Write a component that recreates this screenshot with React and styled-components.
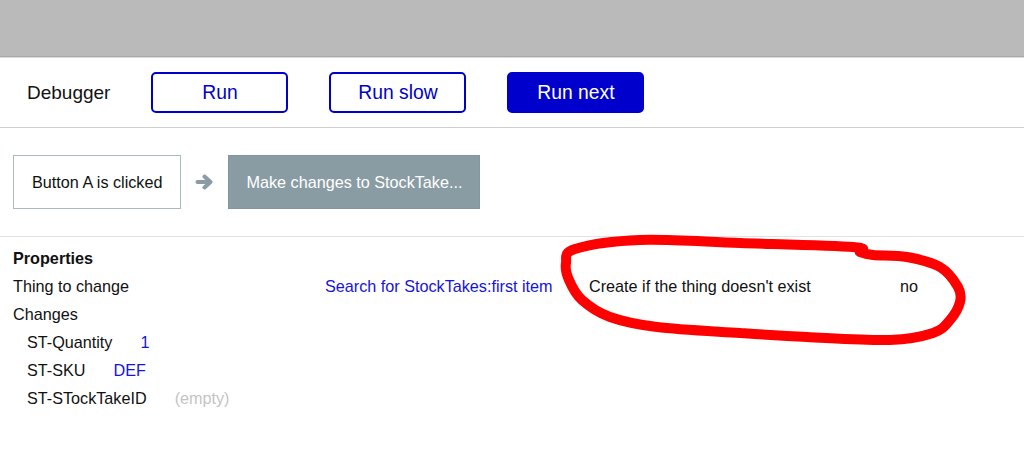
import React from 'react';
import styled, { createGlobalStyle } from 'styled-components';

const GlobalStyle = createGlobalStyle`
  body {
    margin: 0;
    background: #fff;
    font-family: "Liberation Sans", Arial, sans-serif;
    color: #111;
  }
`;

const Page = styled.div`
  position: relative;
  width: 1024px;
  height: 449px;
  overflow: hidden;
`;

const TopBar = styled.div`
  height: 56px;
  background: #bababa;
  border-bottom: 1px solid #a9a9a9;
  box-shadow: 0 1px 0 #dadada;
`;

const Toolbar = styled.div`
  display: flex;
  align-items: center;
  gap: 41px;
  height: 69px;
  margin-top: 1px;
  padding-left: 27px;
  border-bottom: 1px solid #cfcfcf;
`;

const Title = styled.span`
  font-size: 19px;
  color: #111;
`;

const Button = styled.button`
  width: 137px;
  height: 41px;
  border: 2px solid #0000cc;
  border-radius: 5px;
  background: ${(p) => (p.primary ? '#0000cc' : '#fff')};
  color: ${(p) => (p.primary ? '#fff' : '#0000cc')};
  font-family: inherit;
  font-size: 19.3px;
  cursor: pointer;
`;

const Flow = styled.div`
  display: flex;
  align-items: center;
  padding: 27px 13px 27px;
  border-bottom: 1px solid #e2e2e2;
`;

const Step = styled.div`
  display: flex;
  align-items: center;
  height: 54px;
  box-sizing: border-box;
  padding: 0 ${(p) => (p.active ? '17px' : '18px')};
  font-size: 16.2px;
  border: 1px solid ${(p) => (p.active ? '#83969d' : '#a9b9c0')};
  background: ${(p) => (p.active ? '#8a9ca3' : '#fff')};
  color: ${(p) => (p.active ? '#fff' : '#111')};
`;

const ArrowIcon = styled.svg`
  margin: 0 14px 0 14px;
  flex-shrink: 0;
`;

const Properties = styled.div`
  padding: 7px 13px 0;
  font-size: 16.2px;
`;

const Heading = styled.div`
  font-weight: bold;
  line-height: 28px;
`;

const PropGrid = styled.div`
  display: grid;
  grid-template-columns: 312px 264px 311px auto;
  line-height: 28px;
`;

const Link = styled.span`
  color: #1414dd;
`;

const Row = styled.div`
  line-height: 28px;
`;

const ChangeRow = styled.div`
  display: flex;
  gap: 28px;
  padding-left: 14px;
  line-height: 28px;
`;

const Value = styled.span`
  color: ${(p) => (p.empty ? '#c4c4c4' : '#1414dd')};
`;

const Scribble = styled.svg`
  position: absolute;
  left: 555px;
  top: 232px;
  pointer-events: none;
`;

// hand-drawn red loop around the "Create if..." option
const loop = [
  [20, 17], [85, 8], [185, 11], [298, 15], [305, 20], [318, 23], [352, 25],
  [385, 35], [403, 55], [405, 70], [395, 88], [378, 101], [335, 108],
  [252, 105], [185, 101], [102, 95], [55, 85], [27, 68], [14, 48], [11, 31],
];

const smoothPath = (pts) => {
  const n = pts.length;
  let d = `M${pts[0][0]},${pts[0][1]}`;
  for (let i = 0; i < n; i++) {
    const p0 = pts[(i - 1 + n) % n];
    const p1 = pts[i];
    const p2 = pts[(i + 1) % n];
    const p3 = pts[(i + 2) % n];
    const c1 = [p1[0] + (p2[0] - p0[0]) / 6, p1[1] + (p2[1] - p0[1]) / 6];
    const c2 = [p2[0] - (p3[0] - p1[0]) / 6, p2[1] - (p3[1] - p1[1]) / 6];
    d += ` C${c1[0]},${c1[1]} ${c2[0]},${c2[1]} ${p2[0]},${p2[1]}`;
  }
  return d + 'Z';
};

const changes = [
  { name: 'ST-Quantity', value: '1' },
  { name: 'ST-SKU', value: 'DEF' },
  { name: 'ST-STockTakeID', value: '(empty)', empty: true },
];

const App = () => {
  return (
    <Page>
      <GlobalStyle />
      <TopBar />

      <Toolbar>
        <Title>Debugger</Title>
        <Button>Run</Button>
        <Button>Run slow</Button>
        <Button primary>Run next</Button>
      </Toolbar>

      <Flow>
        <Step>Button A is clicked</Step>
        <ArrowIcon width="19" height="16" viewBox="0 0 19 16">
          <path
            d="M2.5 8 H15 M9.5 2.5 L15.5 8 L9.5 13.5"
            fill="none"
            stroke="#8a9ca3"
            strokeWidth="4"
            strokeLinecap="round"
            strokeLinejoin="round"
          />
        </ArrowIcon>
        <Step active>Make changes to StockTake...</Step>
      </Flow>

      <Properties>
        <Heading>Properties</Heading>
        <PropGrid>
          <span>Thing to change</span>
          <Link>Search for StockTakes:first item</Link>
          <span>Create if the thing doesn't exist</span>
          <span>no</span>
        </PropGrid>
        <Row>Changes</Row>
        {changes.map((c) => (
          <ChangeRow key={c.name}>
            <span>{c.name}</span>
            <Value empty={c.empty}>{c.value}</Value>
          </ChangeRow>
        ))}
      </Properties>

      <Scribble width="420" height="122" viewBox="0 0 420 122">
        <path
          d={smoothPath(loop)}
          fill="none"
          stroke="#ff0000"
          strokeWidth="10"
          strokeLinejoin="round"
        />
      </Scribble>
    </Page>
  );
};

export default App;
